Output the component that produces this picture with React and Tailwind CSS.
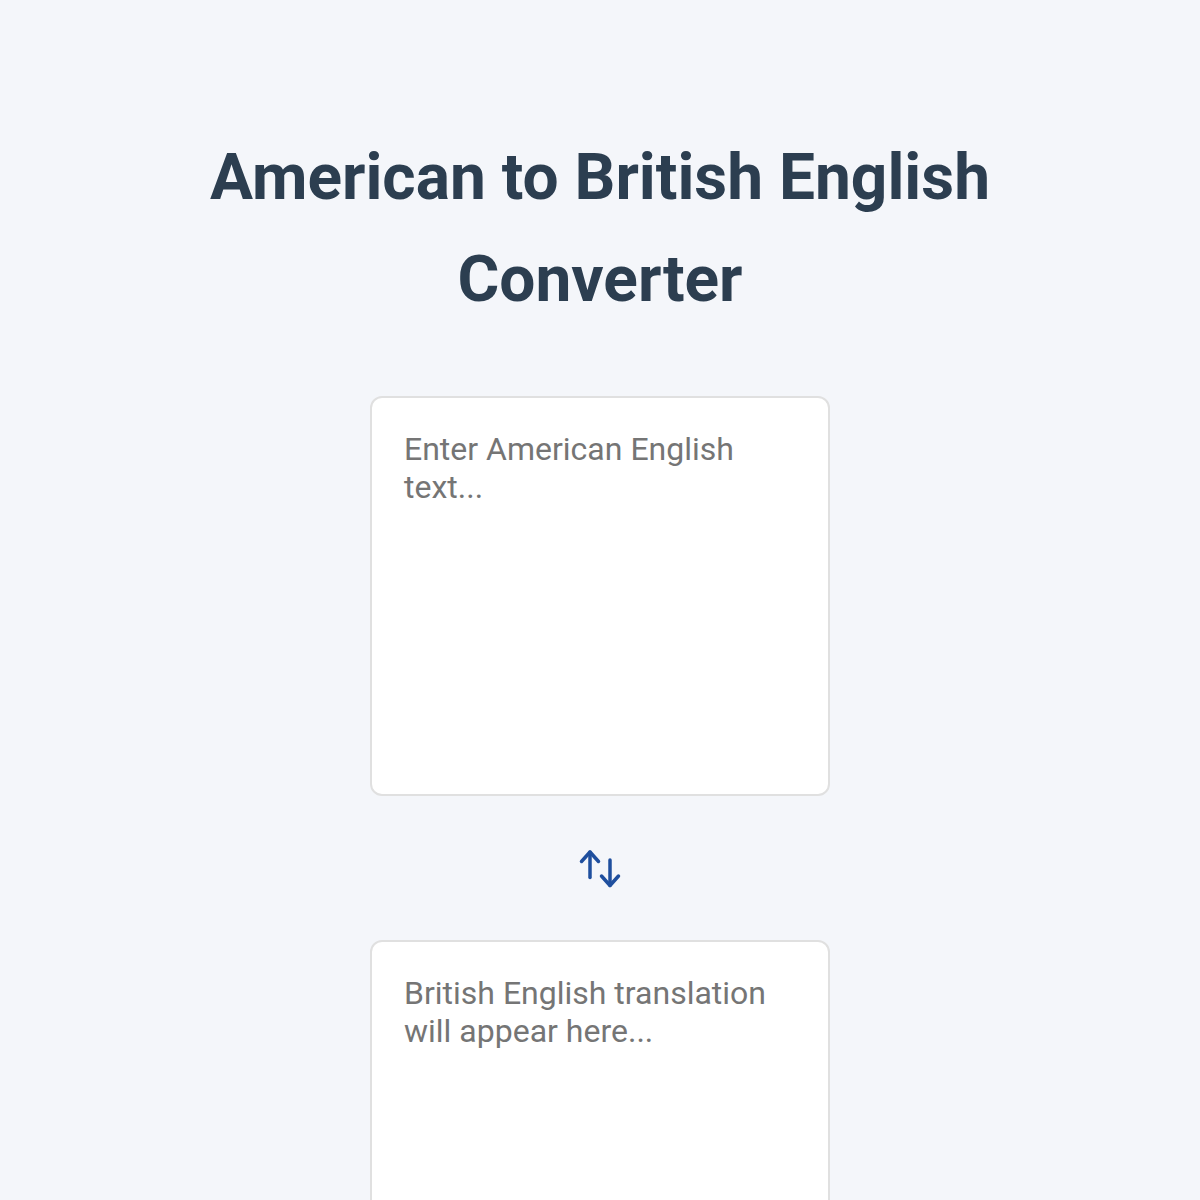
import React, { useState } from "react";

const SwapIcon = () => (
  <svg width="48" height="48" viewBox="0 0 48 48" fill="none">
    <g stroke="#1f4f9e" strokeWidth="3.5" strokeLinecap="round" strokeLinejoin="round">
      {/* up arrow */}
      <path d="M14 7v25.5" />
      <path d="M5.5 16.5L14 7l8.5 9.5" />
      {/* down arrow */}
      <path d="M34 15v25.5" />
      <path d="M25.5 31L34 40.5 42.5 31" />
    </g>
  </svg>
);

const App = () => {
  const [input, setInput] = useState("");
  const [output] = useState("");

  return (
    <div
      className="min-h-screen bg-[#f4f6fa] flex flex-col items-center"
      style={{ fontFamily: "Roboto, 'Noto Sans', sans-serif" }}
    >
      <h1 className="max-w-[820px] mt-[127px] text-center text-[64px] leading-[102px] font-bold text-[#2c3e50]">
        American to British English Converter
      </h1>

      <textarea
        value={input}
        onChange={(e) => setInput(e.target.value)}
        placeholder="Enter American English text..."
        className="mt-[65px] w-[460px] h-[400px] p-8 bg-white border-2 border-[#e0e0e0] rounded-xl text-[32px] leading-[38px] text-[#333] placeholder:text-[#757575] outline-none resize-none"
      />

      {/* Swap direction */}
      <button className="mt-[49px] mb-[47px] flex items-center justify-center">
        <SwapIcon />
      </button>

      <textarea
        value={output}
        readOnly
        placeholder="British English translation will appear here..."
        className="w-[460px] h-[400px] p-8 bg-white border-2 border-[#e0e0e0] rounded-xl text-[32px] leading-[38px] text-[#333] placeholder:text-[#757575] outline-none resize-none"
      />
    </div>
  );
};

export default App;
